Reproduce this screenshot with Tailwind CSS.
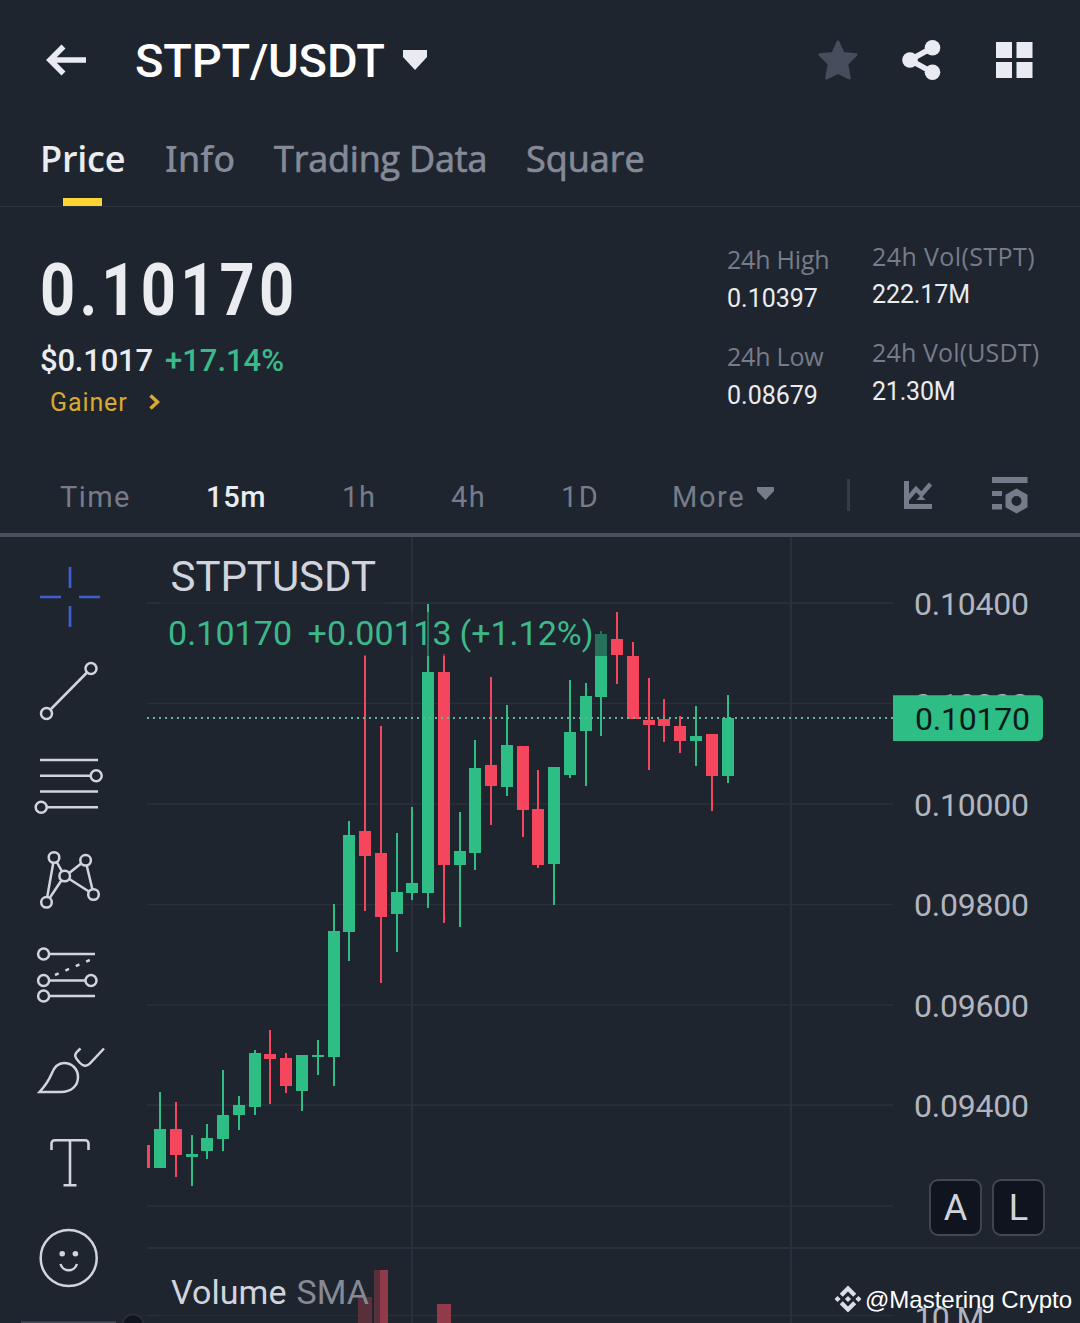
<!DOCTYPE html>
<html lang="en">
<head>
  <meta charset="UTF-8" />
  <meta name="viewport" content="width=device-width, initial-scale=1.0"/>
  <title>STPT/USDT | Price</title>

  <!-- Tailwind CSS -->
  <script src="https://cdn.jsdelivr.net/npm/@tailwindcss/browser@4"></script>
</head>
<body class="bg-[#1f252f] text-[#eaecef] font-['Roboto',sans-serif] overflow-hidden">
  <div class="w-[1080px] h-[1323px] flex flex-col overflow-hidden">

    <!-- Header -->
    <header class="h-[120px] shrink-0 flex items-center pl-[46px] pr-[47px]">
      <svg class="w-10 h-8" viewBox="0 0 40 32" fill="none" stroke="#eaebf2" stroke-width="5.6"><path d="M40 16H4M17.500 2.500L4 16l13.500 13.500"/></svg>
      <h1 class="ml-[49px] mt-[2px] text-[47px] leading-[60px] font-medium tracking-[-0.2px] text-white whitespace-nowrap">STPT/USDT</h1>
      <svg class="ml-[18px] w-6 h-5" viewBox="0 0 24 20" fill="#eaebf2"><path d="M0 0h24v7L12 20 0 7z"/></svg>
      <div class="ml-auto flex items-center">
        <svg class="w-10 h-10" viewBox="0 0 40 40" fill="#474d5c" stroke="#474d5c" stroke-width="3" stroke-linejoin="round"><path d="M20 2l5.200 11.500 12.800 1.200-9.300 9.300 2.600 14L20 32.500 8.700 38l2.600-14L2 14.700l12.800-1.200z"/></svg>
        <svg class="ml-[44px] w-[39px] h-10" viewBox="0 0 39 40" fill="#eaebf2"><path d="M8 20L30 7.800M8 20l22 12.200" stroke="#eaebf2" stroke-width="5.500"/><circle cx="8" cy="20" r="7.800"/><circle cx="30.500" cy="7.800" r="7.800"/><circle cx="30.500" cy="32.200" r="7.800"/></svg>
        <svg class="ml-[55px] w-[37px] h-9" viewBox="0 0 37 36" fill="#eaebf2"><path d="M0 0h16v16H0zM20.500 0h16v16h-16zM0 20h16v16H0zM20.500 20h16v16h-16z"/></svg>
      </div>
    </header>

    <!-- Tabs -->
    <nav class="h-[87px] shrink-0 flex items-start border-b border-[#2c323d] pl-[40px] pt-[14px] text-[36px] leading-[50px] font-['Open_Sans',sans-serif] text-[#848a98] whitespace-nowrap">
      <div class="w-[125px] h-full relative text-[#eaecef] font-semibold tracking-[-0.2px]">Price
        <i class="absolute left-[23px] bottom-0 w-[39px] h-2 bg-[#fcd535]"></i>
      </div>
      <div class="w-[109px] font-['Noto_Sans',sans-serif] font-medium">Info</div>
      <div class="w-[252px] tracking-[-0.2px] [-webkit-text-stroke:0.7px]">Trading Data</div>
      <div class="[-webkit-text-stroke:0.7px]">Square</div>
    </nav>

    <!-- Ticker -->
    <section class="h-[253px] shrink-0 flex pl-[40px] whitespace-nowrap">
      <div class="w-[687px] pt-[45px]">
        <div class="h-[76px] text-[73px] leading-[76px] font-bold"><span class="inline-block origin-left scale-x-[0.84] tracking-[5px]">0.10170</span></div>
        <div class="mt-[13px] h-10 flex gap-[12px] text-[31px] leading-10 font-medium"><span class="tracking-[-0.2px]">$0.1017</span><span class="text-[#3cb98a]">+17.14%</span></div>
        <div class="mt-[6px] h-8 pl-[10px] flex items-center text-[25px] leading-8 text-[#d9ab2c]">
          <span class="tracking-[0.9px]">Gainer</span>
          <svg class="ml-[21px] -mt-[2px] w-[11px] h-4" viewBox="0 0 11 16" fill="none" stroke="currentColor" stroke-width="3.500"><path d="M1.500 1.500L8.500 8l-7 6.500"/></svg>
        </div>
      </div>
      <div class="w-[145px] pt-[36px] text-[25px] leading-8">
        <div class="font-['Open_Sans',sans-serif] tracking-[-0.2px] text-[#767c89]">24h High</div>
        <div class="mt-[8px]">0.10397</div>
        <div class="mt-[25px] font-['Open_Sans',sans-serif] tracking-[-0.2px] text-[#767c89]">24h Low</div>
        <div class="mt-[8px]">0.08679</div>
      </div>
      <div class="pt-[33px] text-[25px] leading-8">
        <div class="font-['Open_Sans',sans-serif] tracking-[0.4px] text-[#767c89]">24h Vol(STPT)</div>
        <div class="mt-[7px] tracking-[-0.1px]">222.17M</div>
        <div class="mt-[25px] font-['Open_Sans',sans-serif] tracking-[0.15px] text-[#767c89]">24h Vol(USDT)</div>
        <div class="mt-[8px] tracking-[-0.2px]">21.30M</div>
      </div>
    </section>

    <!-- Timeframes -->
    <div class="h-[77px] shrink-0 flex items-center border-b-4 border-[#4c525d] pl-[60px] text-[29px] text-[#767c89] whitespace-nowrap">
      <div class="w-[146px] pt-[2px] tracking-[1.4px]">Time</div>
      <div class="w-[136px] pt-[2px] text-[#eaecef] font-medium tracking-[0.7px]">15m</div>
      <div class="w-[109px] pt-[2px] tracking-[0.8px]">1h</div>
      <div class="w-[110px] pt-[2px] tracking-[1.5px]">4h</div>
      <div class="w-[111px] pt-[2px] tracking-[1.5px]">1D</div>
      <div class="w-[175px] flex items-center"><span class="pt-[2px] tracking-[1.6px]">More</span>
        <svg class="ml-[12px] -mt-[6px] w-[17px] h-[13px]" viewBox="0 0 17 13" fill="currentColor"><path d="M0 0h17v4L8.500 13 0 4z"/></svg>
      </div>
      <i class="w-[3px] h-8 -mt-1 bg-[#363c47]"></i>
      <svg class="ml-[53px] -mt-1 w-[30px] h-[30px]" viewBox="903 479 30 30" fill="none" stroke="currentColor" stroke-width="5"><path d="M906.500 480v25.500H932"/><path d="M906.500 499l9.500-11 5.500 5.500L930.500 483" stroke-width="4.500"/><path d="M921 494l4.500 5h-9z" fill="currentColor" stroke="none"/></svg>
      <svg class="ml-[58px] -mt-1 w-[38px] h-[38px]" viewBox="991 476 38 38" fill="currentColor"><path d="M992 477h35.500v6H992zM992 491h10v5h-10zM992 504h10v5.500h-10z"/><path fill-rule="evenodd" d="M1016.500 488.500l11 6.200v12.600l-11 6.200-11-6.200v-12.600zm0 7.500a5 5 0 100 10 5 5 0 000-10z"/></svg>
    </div>

    <!-- Chart area -->
    <main class="flex-1 flex">
      <!-- Drawing tools -->
      <aside class="w-[147px] shrink-0 flex flex-col">
        <svg class="w-[147px] h-[105px]" viewBox="0 537 147 105" stroke="#3d5fd0" stroke-width="2.700" fill="none"><path d="M40 597h21M79 597h21M70 567v21M70 606v21"/></svg>
        <svg class="w-[147px] h-24" viewBox="0 642 147 96" stroke="#d1d4dc" stroke-width="2.500" fill="none"><circle cx="91" cy="668.500" r="5.500"/><circle cx="46.500" cy="713.500" r="5.500"/><path d="M50.500 709.500L87 672.500"/></svg>
        <svg class="w-[147px] h-[94px]" viewBox="0 738 147 94" stroke="#d1d4dc" stroke-width="2.500" fill="none"><path d="M40 760h58M40 775.700h50.500M40 791.500h58M47 807.300h51"/><circle cx="96.200" cy="775.700" r="5.500"/><circle cx="41.200" cy="807.300" r="5.500"/></svg>
        <svg class="w-[147px] h-24" viewBox="0 832 147 96" stroke="#d1d4dc" stroke-width="2.500" fill="none"><circle cx="54" cy="857.500" r="5.300"/><circle cx="85.600" cy="860.300" r="5.300"/><circle cx="64.700" cy="876" r="5.300"/><circle cx="93.500" cy="894.500" r="5.300"/><circle cx="46.500" cy="902.300" r="5.300"/><path d="M53.300 862.700L47.200 897M56.700 862l5.300 9.300M69.200 873l12-9.500M61.500 880.200L49.700 898M69.300 879l19.600 12.500M86.700 865.500l5.700 23.700"/></svg>
        <svg class="w-[147px] h-[92px]" viewBox="0 928 147 92" stroke="#d1d4dc" stroke-width="2.500" fill="none"><circle cx="43.600" cy="954" r="5.500"/><circle cx="43.600" cy="980.500" r="5.500"/><circle cx="91" cy="980.500" r="5.500"/><circle cx="43.600" cy="996" r="5.500"/><path d="M49 954h46M49 980.500h36.500M49 996h46"/><path d="M55 975l36-15.500" stroke-dasharray="4 7.300"/></svg>
        <svg class="w-[147px] h-[95px]" viewBox="0 1020 147 95" stroke="#d1d4dc" stroke-width="2.500" fill="none"><path d="M39.500 1092c6-6.500 9.500-12 12-18 2.500-6.500 6-11 12.500-11 8 0 14 6 14 14 0 9-7 15-17 15z"/><path d="M80.500 1048.500l-3.500 3.300c-2.200 2.200-2.200 4.700-.5 7l3 3.700c3.500 3.800 7 4.300 10.300 1.200L104 1048.500"/></svg>
        <svg class="w-[147px] h-[95px]" viewBox="0 1115 147 95" stroke="#d1d4dc" stroke-width="2.600" fill="none"><path d="M51.500 1150v-6.500a3.300 3.300 0 013.300-3.300h30.400a3.300 3.300 0 013.300 3.300v6.500M70 1140v45M63.500 1185.200h13"/></svg>
        <svg class="w-[147px] h-[113px]" viewBox="0 1210 147 113" stroke="#d1d4dc" stroke-width="2.500" fill="none"><circle cx="68.700" cy="1258" r="28"/><path d="M60.500 1264a8.500 8.500 0 0016.400 0"/><circle cx="62.200" cy="1253.700" r="2.800" fill="#d1d4dc" stroke="none"/><circle cx="75.400" cy="1253.700" r="2.800" fill="#d1d4dc" stroke="none"/><path d="M21 1322.500h95" stroke="#434855"/><circle cx="133" cy="1325" r="10.500" fill="#10141d" stroke="#2b313c" stroke-width="1.500"/></svg>
      </aside>

      <!-- Candles, axis and volume -->
      <svg class="w-[933px] h-[786px]" viewBox="147 537 933 786" font-family="Roboto, sans-serif">
        <path d="M147 603.200h746M147 703.500h746M147 804h746M147 904.500h746M147 1005h746M147 1105.200h746M147 1206h746M147 1315.500h746" stroke="#2a303a" stroke-width="1.700"/>
        <path d="M412 537v786M791 537v786M147 1248h933" stroke="#2b313c" stroke-width="2"/>

        <g id="candles"></g>
        <g fill="#913a49">
          <path d="M374 1270h14v53h-14zM437 1304h14v19h-14zM358 1297h14v26h-14z"/>
        </g>
        <path d="M147 718h746" stroke="#62b79b" stroke-width="2" stroke-dasharray="2 4"/>

        <!-- Legends -->
        <g fill="#1f252f" fill-opacity="0.5">
          <path d="M160 553h225v52H160zM160 612h449v44H160zM160 1270h220v53H160z"/>
        </g>
        <text x="170.500" y="591" font-size="42" textLength="205.500" fill="#d1d4dc">STPTUSDT</text>
        <g font-size="34" fill="#3cb98a">
          <text x="168" y="645" textLength="124">0.10170</text>
          <text x="307.500" y="645" textLength="144">+0.00113</text>
          <text x="459.500" y="645" textLength="134">(+1.12%)</text>
        </g>
        <text x="171" y="1304" font-size="34" textLength="115.500" fill="#d1d4dc">Volume</text>
        <text x="296.500" y="1304" font-size="34" textLength="72.500" fill="#868a95">SMA</text>

        <!-- Price axis -->
        <g font-size="32" fill="#b2b5be">
          <text x="914" y="615" textLength="115">0.10400</text>
          <text x="914" y="715.500" textLength="115">0.10200</text>
          <text x="914" y="816" textLength="115">0.10000</text>
          <text x="914" y="916.300" textLength="115">0.09800</text>
          <text x="914" y="1017" textLength="115">0.09600</text>
          <text x="914" y="1117.200" textLength="115">0.09400</text>
          <text x="914.500" y="1329" textLength="70">10 M</text>
        </g>
        <path d="M893 695.300h145a5 5 0 015 5v35.700a5 5 0 01-5 5H893z" fill="#2ebd85"/>
        <text x="915" y="730" font-size="32" textLength="115" fill="#0b1a18">0.10170</text>

        <!-- Auto / log toggles -->
        <g fill="#10141e" stroke="#434855" stroke-width="1.800">
          <rect x="930" y="1180" width="51" height="55" rx="8"/>
          <rect x="993" y="1180" width="51" height="55" rx="8"/>
        </g>
        <g font-size="36" fill="#d1d4dc" text-anchor="middle">
          <text x="955.500" y="1220">A</text>
          <text x="1018.500" y="1220">L</text>
        </g>

        <!-- Watermark -->
        <svg x="834.500" y="1285.500" width="27" height="27" viewBox="0 0 24 24" fill="#dcdee3"><path d="M16.624 13.9202l2.7175 2.7154-7.353 7.353-7.353-7.352 2.7175-2.7164 4.6355 4.6595 4.6356-4.6595zm4.6366-4.6366L24 12l-2.7154 2.7164L18.5682 12l2.6924-2.7164zm-9.272.001l2.7163 2.6914-2.7164 2.7174v-.001L9.2721 12l2.7164-2.7154zm-9.2722-.001L5.4088 12l-2.6914 2.6924L0 12l2.7164-2.7164zM11.9885.0115l7.353 7.329-2.7174 2.7154-4.6356-4.6356-4.6355 4.6595-2.7174-2.7154 7.353-7.353z"/></svg>
        <text x="865" y="1308" font-size="24" font-family="Liberation Sans, Arial, sans-serif" textLength="207" fill="#ffffff">@Mastering Crypto</text>
      </svg>
    </main>
  </div>

  <script>
    // x, high, low, body top, body bottom, up
    const candles = [
      [160,1092,1168,1129,1168,1],[176,1102,1177,1129,1155,0],[192,1135,1186,1154,1157,1],
      [207,1124,1159,1138,1151,1],[223,1070,1151,1115,1139,1],[239,1096,1130,1105,1115,1],[255,1050,1115,1053,1107,1],
      [270,1030,1104,1054,1059,0],[286,1053,1093,1058,1086,0],[302,1055,1111,1055,1091,1],[318,1040,1075,1055,1057,1],
      [334,904,1086,931,1057,1],[349,821,961,835,932,1],[365,655,911,831,856,0],[381,726,983,853,917,0],
      [397,833,952,892,914,1],[412,807,900,883,893,1],[428,604,908,672,893,1],[444,654,923,672,865,0],
      [460,812,927,851,865,1],[475,740,870,768,853,1],[491,677,825,765,786,0],[507,705,796,745,787,1],
      [523,746,837,746,810,0],[538,770,868,809,865,0],[554,767,905,767,864,1],[570,680,778,732,775,1],
      [586,683,786,696,731,1],[601,631,736,634,697,1],[617,612,684,639,655,0],[633,642,719,656,719,0],
      [649,678,770,720,725,0],[664,699,742,719,726,0],[680,716,753,726,741,0],[696,706,766,736,741,1],
      [712,734,811,734,776,0],[728,695,783,718,776,1],
      [144,1145,1168,1145,1168,0],
    ];
    document.getElementById('candles').innerHTML = candles.map(([x, hi, lo, top, bot, up]) => {
      const fill = up ? '#2ebd85' : '#f6465d';
      return `<g fill="${fill}"><rect x="${x - 1}" y="${hi}" width="2" height="${lo - hi}"/><rect x="${x - 6}" y="${top}" width="12" height="${bot - top}"/></g>`;
    }).join('');
  </script>
</body>
</html>
